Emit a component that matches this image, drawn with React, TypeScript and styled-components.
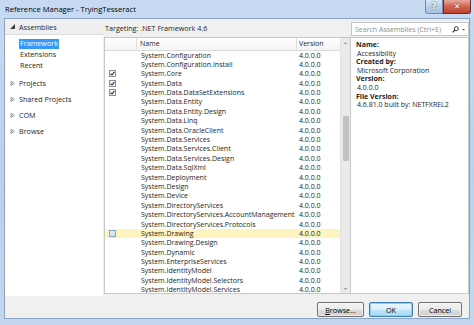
import React from 'react';
import styled, { createGlobalStyle } from 'styled-components';

const GlobalStyle = createGlobalStyle`
  html, body {
    margin:0;
    padding:0;
  }
  body {
    width:474px;
    height:325px;
    overflow:hidden;
    font-family:"Segoe UI","Open Sans",sans-serif;
    color:#1e1e1e;
  }
`

const Window = styled.div`
  display:flex;
  flex-direction:column;
  width:474px;
  height:325px;
  box-sizing:border-box;
  padding:0 4px 6px 4px;
  background:linear-gradient(180deg, #c6dbf1 0%, #b9d1eb 55%, #c3d8ee 100%);
`

const TitleBar = styled.div`
  display:flex;
  align-items:flex-start;
  height:18px;
  flex-shrink:0;
  .title {
    flex:1;
    padding:4px 0 0 1px;
    font-size:7.6px;
    color:#000;
  }
`

const CaptionButton = styled.div<{ $close?: boolean; $w: number }>`
  display:flex;
  align-items:center;
  justify-content:center;
  width:${({ $w }) => $w}px;
  height:14px;
  box-sizing:border-box;
  border:1px solid ${({ $close }) => ($close ? '#6d2a2a' : '#6d8bb0')};
  border-top:none;
  border-radius:${({ $close }) => ($close ? '0 0 3px 0' : '0 0 0 3px')};
  background:${({ $close }) =>
    $close
      ? 'linear-gradient(180deg, #e6a99d 0%, #d0634f 50%, #c1412e 100%)'
      : 'linear-gradient(180deg, #dbe8f5 0%, #b8cfe8 50%, #a6c2e2 100%)'};
  color:#fff;
  font-family:"DejaVu Sans",sans-serif;
  font-size:8px;
  font-weight:bold;
  text-shadow:0 0 2px #333;
  margin-right:${({ $close }) => ($close ? '-1px' : '0')};
`

const Client = styled.div`
  flex:1;
  display:flex;
  flex-direction:column;
  min-height:0;
  border:1px solid #8aa3c2;
  background:#f0f0f0;
`

const Main = styled.div`
  flex:1;
  display:flex;
  min-height:0;
`

const LeftPane = styled.div`
  width:98px;
  flex-shrink:0;
  background:#fff;
  font-size:7.2px;
`

const CategoryHeader = styled.div<{ $open?: boolean }>`
  display:flex;
  align-items:center;
  height:16px;
  padding-left:5px;
  box-sizing:border-box;
  background:${({ $open }) => ($open ? '#efeff2' : '#fff')};
  border-bottom:1px solid ${({ $open }) => ($open ? '#dcdce2' : 'transparent')};
  svg {
    width:5px;
    height:5px;
    margin-right:4px;
  }
`

const SubList = styled.div`
  display:flex;
  flex-direction:column;
  padding:4px 0 5px 14px;
  gap:1.6px;
`

const SubItem = styled.div<{ $selected?: boolean }>`
  align-self:flex-start;
  padding:0 1px;
  height:9.5px;
  line-height:9.5px;
  background:${({ $selected }) => ($selected ? '#3399ff' : 'transparent')};
  color:${({ $selected }) => ($selected ? '#fff' : '#1e1e1e')};
`

const RightArea = styled.div`
  flex:1;
  display:flex;
  flex-direction:column;
  min-width:0;
  padding-left:1px;
`

const TopBar = styled.div`
  display:flex;
  align-items:center;
  justify-content:space-between;
  height:18px;
  flex-shrink:0;
  font-size:7.2px;
  .target {
    padding-left:1px;
  }
`

const SearchBox = styled.div`
  display:flex;
  align-items:center;
  width:118px;
  height:14px;
  box-sizing:border-box;
  margin-top:2px;
  padding:0 2px 0 3px;
  background:#fff;
  border:1px solid #c6c6c6;
  color:#8d8d8d;
  font-size:7px;
  span {
    flex:1;
  }
  svg {
    margin-left:2px;
  }
`

const Body = styled.div`
  flex:1;
  display:flex;
  min-height:0;
  margin-bottom:2px;
`

const ListBox = styled.div`
  display:flex;
  width:247px;
  flex-shrink:0;
  box-sizing:border-box;
  border:1px solid #c8c8c8;
  background:#fff;
  overflow:hidden;
`

const Grid = styled.div`
  flex:1;
  display:flex;
  flex-direction:column;
  min-width:0;
  font-size:7px;
`

const cols = '32px 160px 1fr';

const HeaderRow = styled.div`
  display:grid;
  grid-template-columns:${cols};
  height:11.5px;
  flex-shrink:0;
  background:linear-gradient(180deg, #ffffff 0%, #f4f4f4 100%);
  border-bottom:1px solid #dadada;
  div {
    display:flex;
    align-items:center;
    border-right:1px solid #e0e0e0;
    padding-left:3px;
  }
  div:last-child {
    border-right:none;
    padding-left:2px;
  }
`

const Row = styled.div<{ $hl?: boolean }>`
  display:grid;
  grid-template-columns:${cols};
  height:9.4px;
  line-height:9.4px;
  flex-shrink:0;
  background:${({ $hl }) => ($hl ? '#fdf4bf' : 'transparent')};
  white-space:nowrap;
  .name {
    padding-left:4px;
  }
  .ver {
    padding-left:2px;
  }
`

const CheckCell = styled.div`
  display:flex;
  align-items:center;
  padding-left:4px;
`

const Check = styled.div<{ $hover?: boolean }>`
  width:7px;
  height:7px;
  box-sizing:border-box;
  border:1px solid ${({ $hover }) => ($hover ? '#7fa6cf' : '#8f8f8f')};
  background:${({ $hover }) =>
    $hover ? 'linear-gradient(135deg, #e4f0fb, #c9def3)' : 'linear-gradient(135deg, #f0f0f0, #fff)'};
  display:flex;
  align-items:center;
  justify-content:center;
`

const ScrollBar = styled.div`
  display:flex;
  flex-direction:column;
  align-items:center;
  width:9px;
  flex-shrink:0;
  background:#eaeaea;
  border-left:1px solid #e2e2e2;
  .track {
    flex:1;
    width:100%;
    display:flex;
    flex-direction:column;
  }
  .arrow {
    height:9px;
    display:flex;
    align-items:center;
    justify-content:center;
  }
`

const Thumb = styled.div`
  margin:69px auto 0 auto;
  width:6px;
  height:45px;
  background:#c2c2c2;
  border-radius:1px;
`

const Details = styled.div`
  flex:1;
  box-sizing:border-box;
  padding:3px 0 0 5px;
  background:#fff;
  border:1px solid #c8c8c8;
  border-left:none;
  font-size:7px;
  line-height:8.6px;
  color:#1e1e1e;
  b {
    display:block;
    font-weight:bold;
  }
  span {
    display:block;
    padding-left:1px;
  }
`

const ButtonBar = styled.div`
  display:flex;
  justify-content:flex-end;
  align-items:flex-start;
  gap:5px;
  height:22px;
  flex-shrink:0;
  padding:6px 7px 0 0;
  box-sizing:border-box;
`

const Button = styled.div<{ $w: number; $focus?: boolean }>`
  display:flex;
  align-items:center;
  justify-content:center;
  width:${({ $w }) => $w}px;
  height:15px;
  box-sizing:border-box;
  border:1px solid ${({ $focus }) => ($focus ? '#3c7fb1' : '#707070')};
  border-radius:2px;
  background:${({ $focus }) =>
    $focus
      ? 'linear-gradient(180deg, #eaf6fd 0%, #d9f0fc 50%, #bee6fd 51%, #a7d9f5 100%)'
      : 'linear-gradient(180deg, #f2f2f2 0%, #ebebeb 50%, #dddddd 51%, #cfcfcf 100%)'};
  box-shadow:inset 0 0 0 1px ${({ $focus }) => ($focus ? '#92cdf0' : 'rgba(255,255,255,0.6)')};
  font-size:7.2px;
  color:#000;
  u {
    text-decoration:underline;
  }
`

const assemblies: [string, boolean][] = [
  ['System.Configuration', false],
  ['System.Configuration.Install', false],
  ['System.Core', true],
  ['System.Data', true],
  ['System.Data.DataSetExtensions', true],
  ['System.Data.Entity', false],
  ['System.Data.Entity.Design', false],
  ['System.Data.Linq', false],
  ['System.Data.OracleClient', false],
  ['System.Data.Services', false],
  ['System.Data.Services.Client', false],
  ['System.Data.Services.Design', false],
  ['System.Data.SqlXml', false],
  ['System.Deployment', false],
  ['System.Design', false],
  ['System.Device', false],
  ['System.DirectoryServices', false],
  ['System.DirectoryServices.AccountManagement', false],
  ['System.DirectoryServices.Protocols', false],
  ['System.Drawing', false],
  ['System.Drawing.Design', false],
  ['System.Dynamic', false],
  ['System.EnterpriseServices', false],
  ['System.IdentityModel', false],
  ['System.IdentityModel.Selectors', false],
  ['System.IdentityModel.Services', false],
];

const Expanded = () => (
  <svg viewBox="0 0 5 5"><path d="M5 0 L5 5 L0 5 Z" fill="#3c3c3c" /></svg>
);

const Collapsed = () => (
  <svg viewBox="0 0 5 5"><path d="M1 0.5 L4.2 2.5 L1 4.5 Z" fill="none" stroke="#707070" strokeWidth="0.8" /></svg>
);

const CheckMark = () => (
  <svg width="5" height="5" viewBox="0 0 5 5">
    <path d="M0.6 2.6 L2 4 L4.4 0.8" fill="none" stroke="#1b2f5c" strokeWidth="1.1" />
  </svg>
);

const App = () => {
  return (
    <>
      <GlobalStyle />
      <Window>
        <TitleBar>
          <div className="title">Reference Manager - TryingTesseract</div>
          <CaptionButton $w={18}>?</CaptionButton>
          <CaptionButton $close $w={28}>✕</CaptionButton>
        </TitleBar>
        <Client>
          <Main>
            <LeftPane>
              <CategoryHeader $open><Expanded />Assemblies</CategoryHeader>
              <SubList>
                <SubItem $selected>Framework</SubItem>
                <SubItem>Extensions</SubItem>
                <SubItem>Recent</SubItem>
              </SubList>
              <CategoryHeader><Collapsed />Projects</CategoryHeader>
              <CategoryHeader><Collapsed />Shared Projects</CategoryHeader>
              <CategoryHeader><Collapsed />COM</CategoryHeader>
              <CategoryHeader><Collapsed />Browse</CategoryHeader>
            </LeftPane>
            <RightArea>
              <TopBar>
                <span className="target">Targeting: .NET Framework 4.6</span>
                <SearchBox>
                  <span>Search Assemblies (Ctrl+E)</span>
                  <svg width="7" height="7" viewBox="0 0 7 7">
                    <circle cx="4.3" cy="2.7" r="2" fill="none" stroke="#333" strokeWidth="1" />
                    <path d="M2.9 4.1 L0.6 6.4" stroke="#333" strokeWidth="1.3" />
                  </svg>
                  <svg width="5" height="5" viewBox="0 0 5 5">
                    <path d="M1 2 L4 2 L2.5 3.6 Z" fill="#444" />
                  </svg>
                </SearchBox>
              </TopBar>
              <Body>
                <ListBox>
                  <Grid>
                    <HeaderRow>
                      <div></div>
                      <div>Name</div>
                      <div>Version</div>
                    </HeaderRow>
                    {assemblies.map(([name, checked], i) => {
                      const hl = name === 'System.Drawing';
                      return (
                        <Row key={i} $hl={hl}>
                          <CheckCell>
                            {(checked || hl) && (
                              <Check $hover={hl}>{checked && <CheckMark />}</Check>
                            )}
                          </CheckCell>
                          <div className="name">{name}</div>
                          <div className="ver">4.0.0.0</div>
                        </Row>
                      );
                    })}
                  </Grid>
                  <ScrollBar>
                    <div className="arrow">
                      <svg width="5" height="4" viewBox="0 0 5 4"><path d="M0.5 3 L2.5 1 L4.5 3 Z" fill="#a0a0a0" /></svg>
                    </div>
                    <div className="track"><Thumb /></div>
                    <div className="arrow">
                      <svg width="5" height="4" viewBox="0 0 5 4"><path d="M0.5 1 L2.5 3 L4.5 1 Z" fill="#a0a0a0" /></svg>
                    </div>
                  </ScrollBar>
                </ListBox>
                <Details>
                  <b>Name:</b>
                  <span>Accessibility</span>
                  <b>Created by:</b>
                  <span>Microsoft Corporation</span>
                  <b>Version:</b>
                  <span>4.0.0.0</span>
                  <b>File Version:</b>
                  <span>4.6.81.0 built by: NETFXREL2</span>
                </Details>
              </Body>
            </RightArea>
          </Main>
          <ButtonBar>
            <Button $w={47}><span><u>B</u>rowse...</span></Button>
            <Button $w={44} $focus>OK</Button>
            <Button $w={44}>Cancel</Button>
          </ButtonBar>
        </Client>
      </Window>
    </>
  );
};

export default App;
